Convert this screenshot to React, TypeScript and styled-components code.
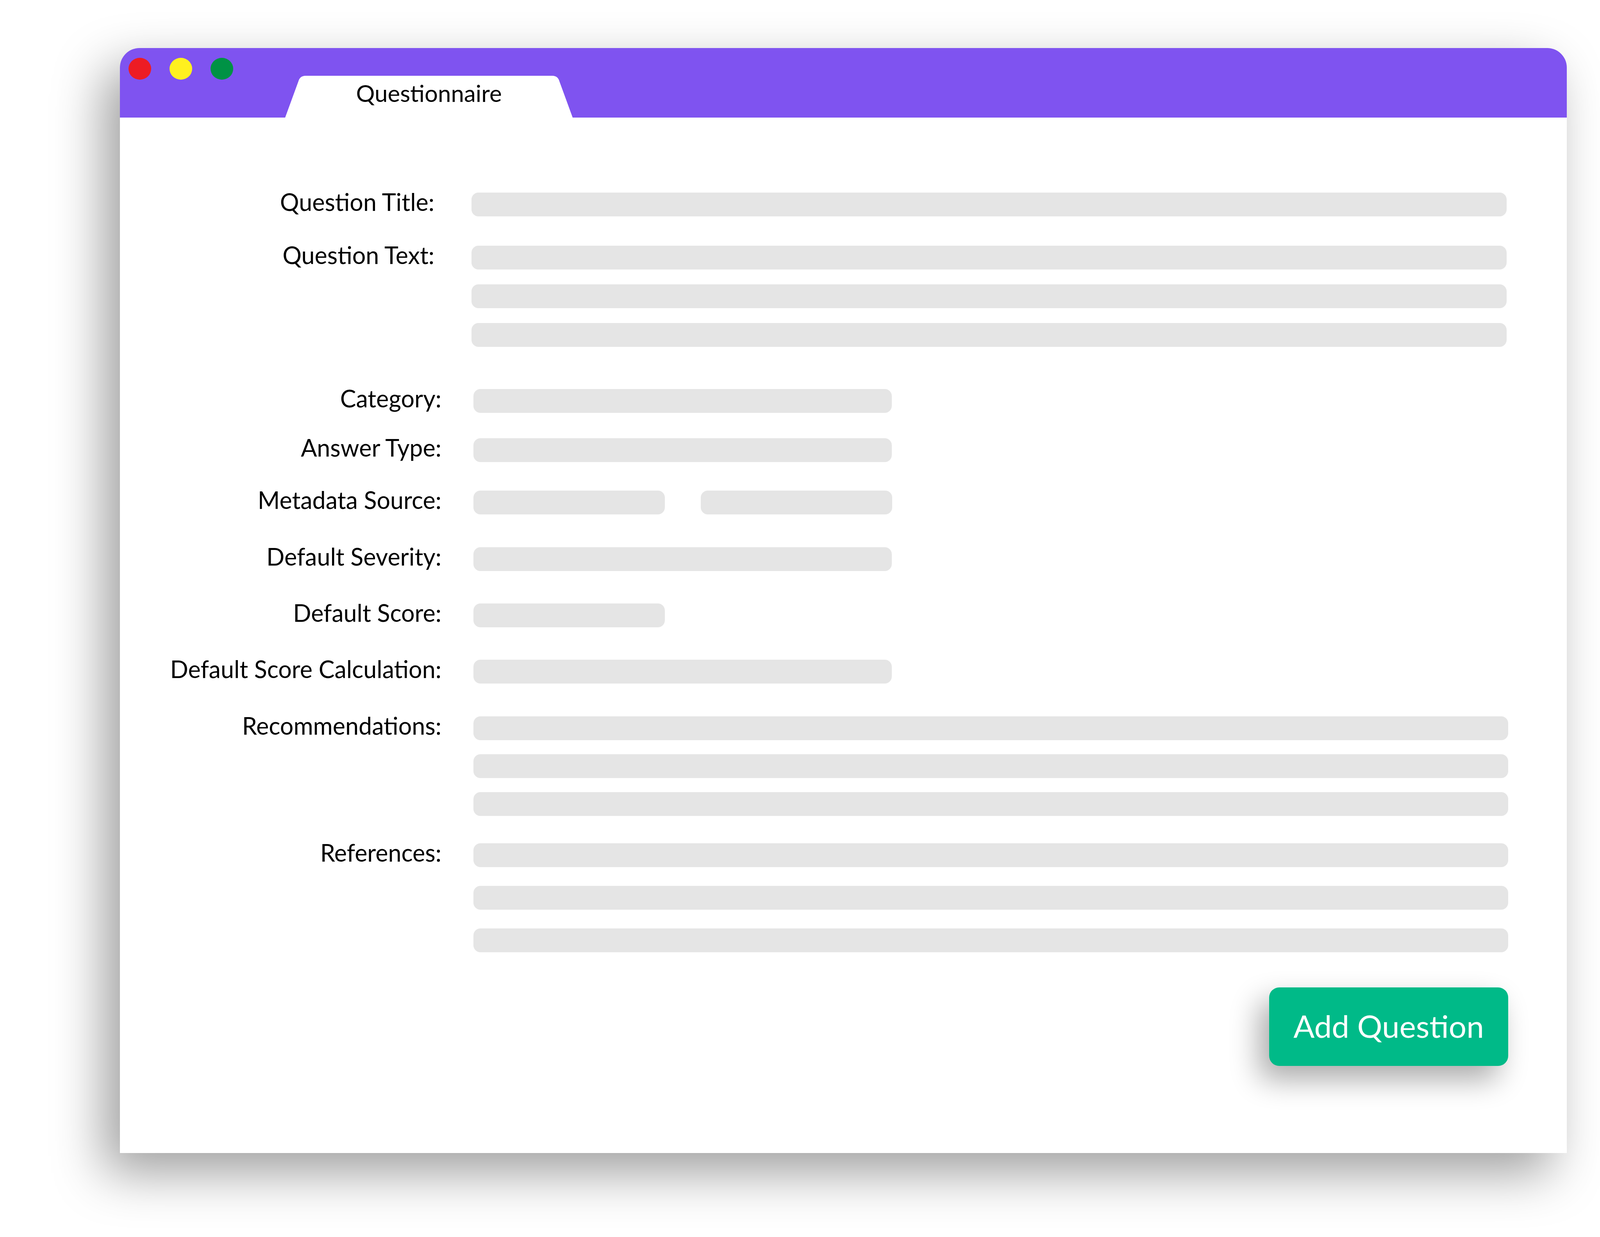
import React from 'react'
import styled, { createGlobalStyle } from 'styled-components'

const GlobalStyle = createGlobalStyle`
  html, body {
    margin: 0;
    padding: 0;
    background: #ffffff;
  }
  body {
    font-family: Lato, 'Open Sans', 'Liberation Sans', sans-serif;
    color: #000;
  }
`

type RowSpec = {
  label: string
  space: number
  bars: ('full' | 'half' | 'quarter')[]
  gap?: number
  pair?: boolean
}

const detailRows: RowSpec[] = [
  { label: 'Category:', space: 0, bars: ['half'] },
  { label: 'Answer Type:', space: 65, bars: ['half'] },
  { label: 'Metadata Source:', space: 73, bars: ['quarter', 'quarter'], pair: true },
  { label: 'Default Severity:', space: 84, bars: ['half'] },
  { label: 'Default Score:', space: 83, bars: ['quarter'] },
  { label: 'Default Score Calculation:', space: 83, bars: ['half'] },
  { label: 'Recommendations:', space: 84, bars: ['full', 'full', 'full'], gap: 36 },
  { label: 'References:', space: 70, bars: ['full', 'full', 'full'], gap: 48 },
]

const App: React.FC = () => {
  return (
    <Page>
      <GlobalStyle />
      <Window>
        <TitleBar>
          <Lights>
            <Light $color='#ed1c24' />
            <Light $color='#fff01f' />
            <Light $color='#009245' />
          </Lights>
          <Tab>Questionnaire</Tab>
        </TitleBar>

        <Content>
          <FormSection $labelWidth={805} $gap={95} $right={154} $top={192}>
            <Row $space={0}>
              <Label>Question Title:</Label>
              <Fields $gap={0}>
                <Bar $size='full' />
              </Fields>
            </Row>
            <Row $space={75}>
              <Label>Question Text:</Label>
              <Fields $gap={38}>
                <Bar $size='full' />
                <Bar $size='full' />
                <Bar $size='full' />
              </Fields>
            </Row>
          </FormSection>

          <FormSection $labelWidth={823} $gap={82} $right={150} $top={108}>
            {detailRows.map((row) => (
              <Row key={row.label} $space={row.space}>
                <Label>{row.label}</Label>
                {row.pair ? (
                  <PairFields>
                    {row.bars.map((size, i) => (
                      <Bar key={i} $size={size} />
                    ))}
                  </PairFields>
                ) : (
                  <Fields $gap={row.gap ?? 0}>
                    {row.bars.map((size, i) => (
                      <Bar key={i} $size={size} />
                    ))}
                  </Fields>
                )}
              </Row>
            ))}
          </FormSection>

          <Actions>
            <AddButton type='button'>Add Question</AddButton>
          </Actions>
        </Content>
      </Window>
    </Page>
  )
}

const Page = styled.div`
  padding: 123px 0 0 307px;
  min-height: 3167px;
  box-sizing: border-box;
`

const Window = styled.div`
  width: 3704px;
  height: 2829px;
  background: #ffffff;
  border-radius: 50px 50px 0 0;
  box-shadow: -40px 50px 130px rgba(0, 0, 0, 0.38);
  display: flex;
  flex-direction: column;
`

const TitleBar = styled.div`
  height: 178px;
  flex-shrink: 0;
  background: #7f53f0;
  border-radius: 50px 50px 0 0;
  display: flex;
  padding-left: 22px;
`

const Lights = styled.div`
  display: flex;
  gap: 47px;
  margin-top: 25px;
  align-self: flex-start;
`

const Light = styled.span<{ $color: string }>`
  width: 58px;
  height: 56px;
  border-radius: 50%;
  background: ${(p) => p.$color};
`

const Tab = styled.div`
  align-self: flex-end;
  margin-left: 133px;
  width: 736px;
  height: 107px;
  box-sizing: border-box;
  padding-top: 8px;
  background: #ffffff;
  clip-path: path('M0 107 L34 14 Q38 0 52 0 L684 0 Q698 0 702 14 L736 107 Z');
  display: flex;
  justify-content: center;
  font-size: 60px;
  line-height: 72px;
  color: #000;
`

const Content = styled.div`
  display: flex;
  flex-direction: column;
`

const FormSection = styled.div<{ $labelWidth: number; $gap: number; $right: number; $top: number }>`
  display: grid;
  grid-template-columns: ${(p) => p.$labelWidth}px 1fr;
  column-gap: ${(p) => p.$gap}px;
  margin: ${(p) => p.$top}px ${(p) => p.$right}px 0 0;
`

const Row = styled.div<{ $space: number }>`
  display: contents;

  & > * {
    margin-top: ${(p) => p.$space}px;
  }
`

const Label = styled.div`
  text-align: right;
  font-size: 61px;
  line-height: 47px;
  white-space: nowrap;
  color: #000;
`

const Fields = styled.div<{ $gap: number }>`
  display: flex;
  flex-direction: column;
  gap: ${(p) => p.$gap}px;
`

const PairFields = styled.div`
  display: flex;
  gap: 92px;
`

const barWidths = {
  full: '100%',
  half: '1071px',
  quarter: '490px',
}

const Bar = styled.div<{ $size: 'full' | 'half' | 'quarter' }>`
  width: ${(p) => barWidths[p.$size]};
  height: 61px;
  border-radius: 18px;
  background: #e5e5e5;
`

const Actions = styled.div`
  display: flex;
  justify-content: flex-end;
  margin: 90px 150px 0 0;
`

const AddButton = styled.button`
  width: 612px;
  height: 201px;
  border: none;
  border-radius: 26px;
  background: #00ba88;
  color: #ffffff;
  font-family: Lato, 'Open Sans', 'Liberation Sans', sans-serif;
  font-size: 80px;
  line-height: 1;
  padding: 0 0 6px;
  box-shadow: -25px 35px 75px rgba(0, 0, 0, 0.33);
  cursor: pointer;
`

export default App
